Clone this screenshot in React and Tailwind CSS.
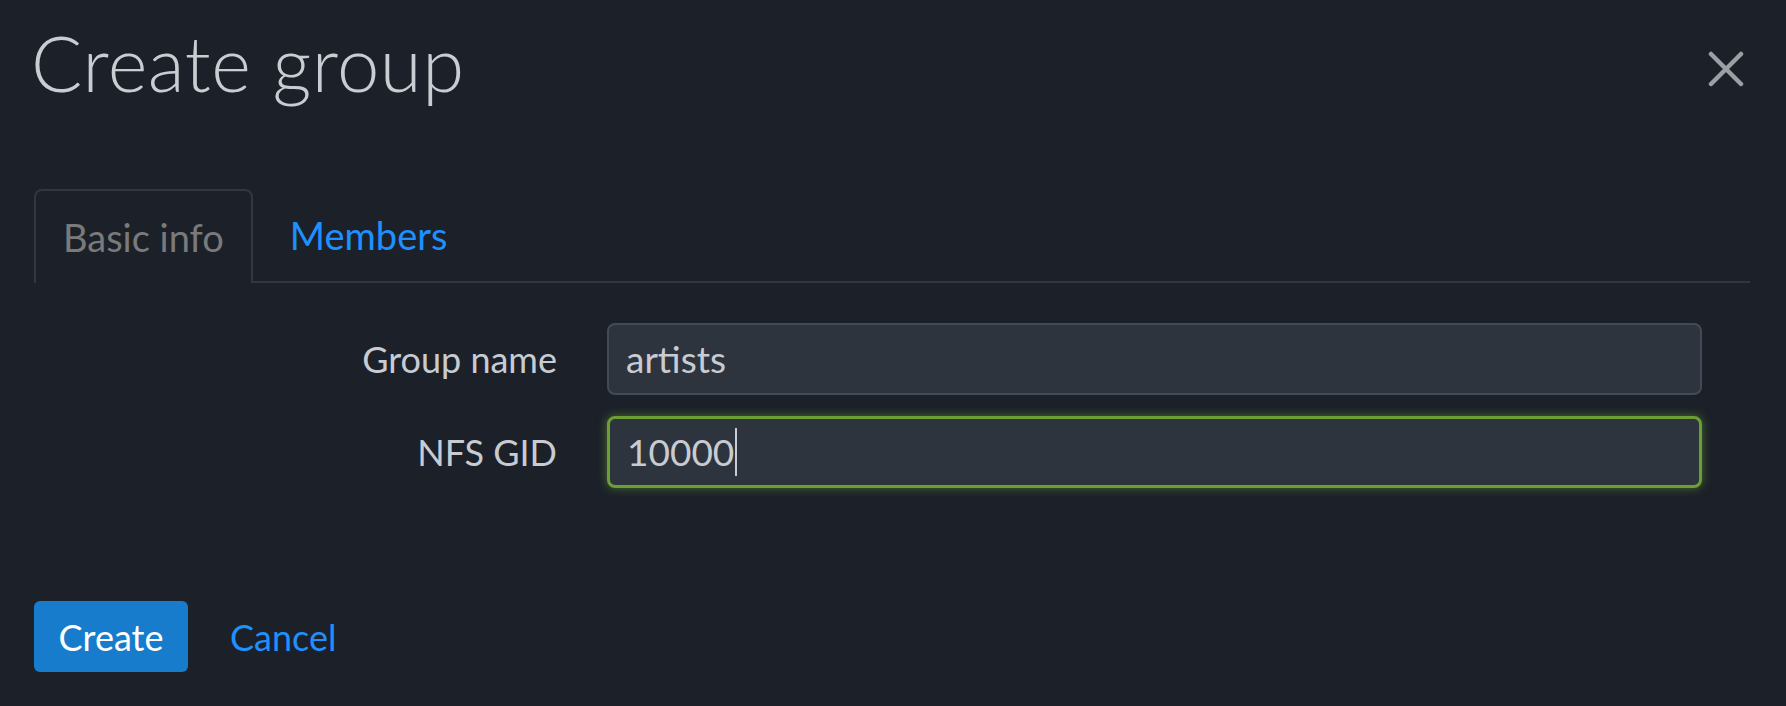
import { useState } from 'react';

const FONT = { fontFamily: 'Lato, "Open Sans", "Liberation Sans", sans-serif' };

function Field({ label, value, focused }) {
  return (
    <>
      <label className="text-right text-[36px] text-[#c8ccd2] self-center">{label}</label>
      <div
        className={`h-[72px] rounded-lg bg-[#2e343d] flex items-center px-[17px] text-[37px] text-[#c8ccd2] ${
          focused
            ? 'border-[3px] border-[#6a9f35] shadow-[0_0_10px_rgba(110,170,50,0.55)]'
            : 'border-2 border-[#434a55]'
        }`}
      >
        <span>{value}</span>
        {focused && <span className="w-[2px] h-[48px] bg-[#c8ccd2] ml-[1px]"></span>}
      </div>
    </>
  );
}

export default function App() {
  const [tab, setTab] = useState('basic');

  return (
    <div className="min-h-screen bg-[#1c2129] pl-[34px] pr-[36px]" style={FONT}>
      {/* Header */}
      <div className="flex items-start justify-between pt-[25px]">
        <h1 className="-ml-[3px] text-[76px] font-light leading-none text-[#c9ccd0] tracking-[0.5px]">Create group</h1>
        <button className="mt-[26px] mr-[6px] w-[36px] h-[36px] text-[#9ca0a5]">
          <svg viewBox="0 0 36 36" width="36" height="36" fill="none" stroke="currentColor" strokeWidth="4.5" strokeLinecap="round">
            <path d="M3 3L33 33M33 3L3 33" />
          </svg>
        </button>
      </div>

      {/* Tabs */}
      <div className="mt-[88px] flex items-end border-b-2 border-[#33363b]">
        <button
          onClick={() => setTab('basic')}
          className="-mb-[2px] h-[94px] px-[27px] rounded-t-lg border-2 border-b-0 border-[#33363b] bg-[#1c2129] text-[38px] font-normal text-[#7a7a7a]"
        >
          Basic info
        </button>
        <button onClick={() => setTab('members')} className="h-[92px] pl-[37px] pr-[34px] text-[38px] font-normal text-[#1e90ff]">
          Members
        </button>
      </div>

      {/* Form */}
      <div className="mt-[40px] grid grid-cols-[523px_1fr] gap-x-[50px] gap-y-[21px] pr-[48px]">
        <Field label="Group name" value="artists" />
        <Field label="NFS GID" value="10000" focused />
      </div>

      {/* Actions */}
      <div className="mt-[113px] flex items-center gap-[42px]">
        <button className="h-[71px] w-[154px] rounded-md bg-[#177ccb] text-[36px] text-white">Create</button>
        <button className="text-[36px] text-[#1e90ff]">Cancel</button>
      </div>
    </div>
  );
}
